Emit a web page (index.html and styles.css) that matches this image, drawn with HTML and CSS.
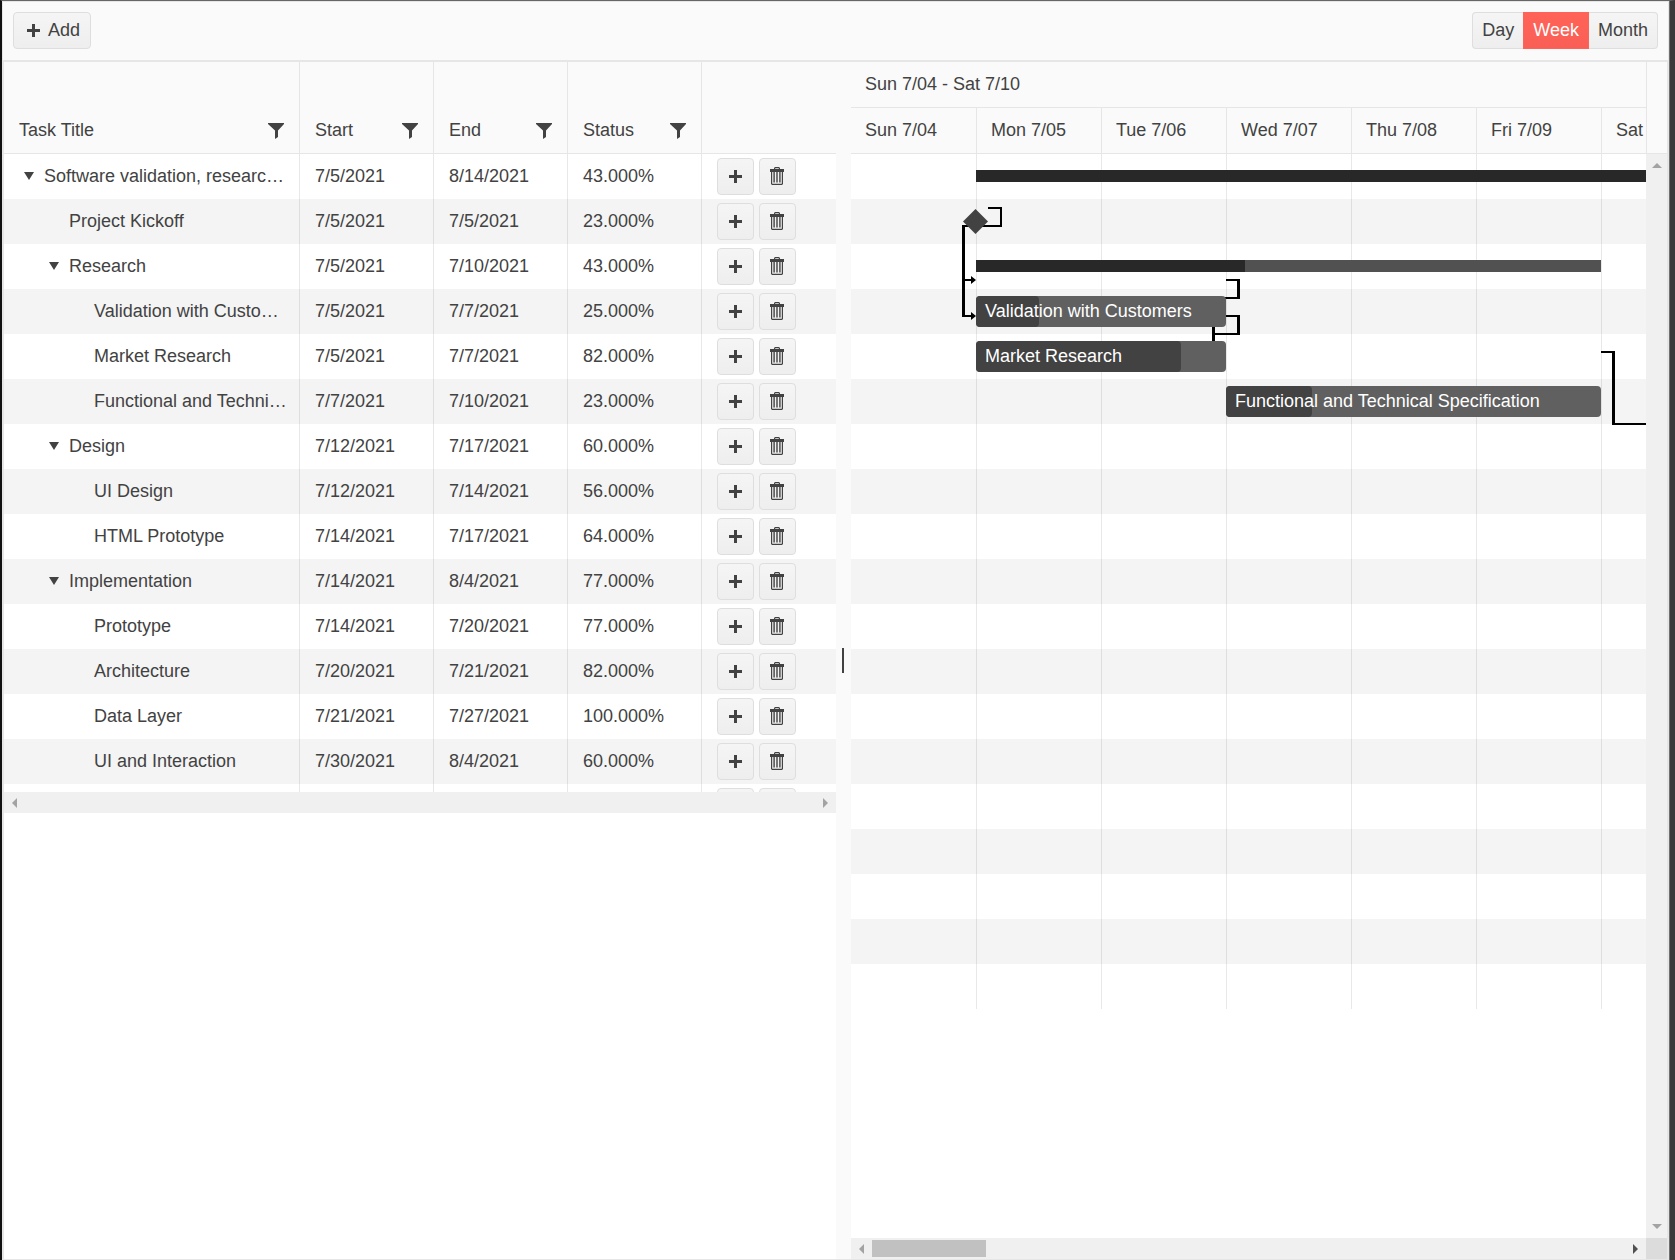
FILE: index.html
```html
<!DOCTYPE html>
<html lang="en">
<head>
<meta charset="utf-8">
<title>Project Gantt</title>
<link rel="stylesheet" href="styles.css">
</head>
<body>
<svg class="sprite" aria-hidden="true">
  <symbol id="plus" viewBox="0 0 13 13"><path d="M5 0h3v5h5v3H8v5H5V8H0V5h5z"/></symbol>
  <symbol id="trash" viewBox="0 0 14 18"><path fill-rule="evenodd" d="M4 2V1l1-1h4l1 1v1h4v3h-1v12l-1 1H2l-1-1V5H0V2zM5.200 2h3.600V1.200H5.200zM2.200 5v11.800h9.600V5zM3.400 5h1.400v10.500H3.400zM6.300 5h1.400v10.500H6.300zM9.200 5h1.400v10.500H9.200z"/></symbol>
  <symbol id="filter" viewBox="0 0 16 16"><path d="M0 0h16v1l-6 6.500V14l-3 2V7.500L0 1z"/></symbol>
</svg>
<main class="gantt">
  <header class="toolbar">
    <button class="btn btn-add" type="button"><svg class="i-plus"><use href="#plus"/></svg>Add</button>
    <div class="views">
      <button class="btn" type="button">Day</button>
      <button class="btn selected" type="button" aria-pressed="true">Week</button>
      <button class="btn" type="button">Month</button>
    </div>
  </header>
  <div class="content">
    <section class="list-pane">
      <div class="list-clip">
        <table class="tasks">
          <colgroup><col class="c-title"><col class="c-date"><col class="c-date"><col class="c-date"><col></colgroup>
          <thead>
            <tr>
              <th><div class="th">Task Title<svg class="i-filter"><use href="#filter"/></svg></div></th>
              <th><div class="th">Start<svg class="i-filter"><use href="#filter"/></svg></div></th>
              <th><div class="th">End<svg class="i-filter"><use href="#filter"/></svg></div></th>
              <th><div class="th">Status<svg class="i-filter"><use href="#filter"/></svg></div></th>
              <th></th>
            </tr>
          </thead>
          <tbody>
            <tr><td class="group">Software validation, researc…</td><td>7/5/2021</td><td>8/14/2021</td><td>43.000%</td><td><div class="actions"><button class="btn" type="button" aria-label="Add task"><svg class="i-plus"><use href="#plus"/></svg></button><button class="btn" type="button" aria-label="Delete task"><svg class="i-trash"><use href="#trash"/></svg></button></div></td></tr>
            <tr><td class="l1">Project Kickoff</td><td>7/5/2021</td><td>7/5/2021</td><td>23.000%</td><td><div class="actions"><button class="btn" type="button" aria-label="Add task"><svg class="i-plus"><use href="#plus"/></svg></button><button class="btn" type="button" aria-label="Delete task"><svg class="i-trash"><use href="#trash"/></svg></button></div></td></tr>
            <tr><td class="group nested">Research</td><td>7/5/2021</td><td>7/10/2021</td><td>43.000%</td><td><div class="actions"><button class="btn" type="button" aria-label="Add task"><svg class="i-plus"><use href="#plus"/></svg></button><button class="btn" type="button" aria-label="Delete task"><svg class="i-trash"><use href="#trash"/></svg></button></div></td></tr>
            <tr><td class="l2">Validation with Custo…</td><td>7/5/2021</td><td>7/7/2021</td><td>25.000%</td><td><div class="actions"><button class="btn" type="button" aria-label="Add task"><svg class="i-plus"><use href="#plus"/></svg></button><button class="btn" type="button" aria-label="Delete task"><svg class="i-trash"><use href="#trash"/></svg></button></div></td></tr>
            <tr><td class="l2">Market Research</td><td>7/5/2021</td><td>7/7/2021</td><td>82.000%</td><td><div class="actions"><button class="btn" type="button" aria-label="Add task"><svg class="i-plus"><use href="#plus"/></svg></button><button class="btn" type="button" aria-label="Delete task"><svg class="i-trash"><use href="#trash"/></svg></button></div></td></tr>
            <tr><td class="l2">Functional and Techni…</td><td>7/7/2021</td><td>7/10/2021</td><td>23.000%</td><td><div class="actions"><button class="btn" type="button" aria-label="Add task"><svg class="i-plus"><use href="#plus"/></svg></button><button class="btn" type="button" aria-label="Delete task"><svg class="i-trash"><use href="#trash"/></svg></button></div></td></tr>
            <tr><td class="group nested">Design</td><td>7/12/2021</td><td>7/17/2021</td><td>60.000%</td><td><div class="actions"><button class="btn" type="button" aria-label="Add task"><svg class="i-plus"><use href="#plus"/></svg></button><button class="btn" type="button" aria-label="Delete task"><svg class="i-trash"><use href="#trash"/></svg></button></div></td></tr>
            <tr><td class="l2">UI Design</td><td>7/12/2021</td><td>7/14/2021</td><td>56.000%</td><td><div class="actions"><button class="btn" type="button" aria-label="Add task"><svg class="i-plus"><use href="#plus"/></svg></button><button class="btn" type="button" aria-label="Delete task"><svg class="i-trash"><use href="#trash"/></svg></button></div></td></tr>
            <tr><td class="l2">HTML Prototype</td><td>7/14/2021</td><td>7/17/2021</td><td>64.000%</td><td><div class="actions"><button class="btn" type="button" aria-label="Add task"><svg class="i-plus"><use href="#plus"/></svg></button><button class="btn" type="button" aria-label="Delete task"><svg class="i-trash"><use href="#trash"/></svg></button></div></td></tr>
            <tr><td class="group nested">Implementation</td><td>7/14/2021</td><td>8/4/2021</td><td>77.000%</td><td><div class="actions"><button class="btn" type="button" aria-label="Add task"><svg class="i-plus"><use href="#plus"/></svg></button><button class="btn" type="button" aria-label="Delete task"><svg class="i-trash"><use href="#trash"/></svg></button></div></td></tr>
            <tr><td class="l2">Prototype</td><td>7/14/2021</td><td>7/20/2021</td><td>77.000%</td><td><div class="actions"><button class="btn" type="button" aria-label="Add task"><svg class="i-plus"><use href="#plus"/></svg></button><button class="btn" type="button" aria-label="Delete task"><svg class="i-trash"><use href="#trash"/></svg></button></div></td></tr>
            <tr><td class="l2">Architecture</td><td>7/20/2021</td><td>7/21/2021</td><td>82.000%</td><td><div class="actions"><button class="btn" type="button" aria-label="Add task"><svg class="i-plus"><use href="#plus"/></svg></button><button class="btn" type="button" aria-label="Delete task"><svg class="i-trash"><use href="#trash"/></svg></button></div></td></tr>
            <tr><td class="l2">Data Layer</td><td>7/21/2021</td><td>7/27/2021</td><td>100.000%</td><td><div class="actions"><button class="btn" type="button" aria-label="Add task"><svg class="i-plus"><use href="#plus"/></svg></button><button class="btn" type="button" aria-label="Delete task"><svg class="i-trash"><use href="#trash"/></svg></button></div></td></tr>
            <tr><td class="l2">UI and Interaction</td><td>7/30/2021</td><td>8/4/2021</td><td>60.000%</td><td><div class="actions"><button class="btn" type="button" aria-label="Add task"><svg class="i-plus"><use href="#plus"/></svg></button><button class="btn" type="button" aria-label="Delete task"><svg class="i-trash"><use href="#trash"/></svg></button></div></td></tr>
            <tr><td></td><td></td><td></td><td></td><td><div class="actions"><button class="btn" type="button" aria-label="Add task"></button><button class="btn" type="button" aria-label="Delete task"></button></div></td></tr>
          </tbody>
        </table>
      </div>
      <div class="hscroll"><i class="arrow left"></i><i class="arrow right"></i></div>
    </section>
    <div class="splitter"><span class="handle"></span></div>
    <section class="time-pane">
      <div class="time-head">
        <div class="time-head-clip">
          <table class="days">
            <thead>
              <tr><th class="range" colspan="7">Sun 7/04 - Sat 7/10</th></tr>
              <tr><th>Sun 7/04</th><th>Mon 7/05</th><th>Tue 7/06</th><th>Wed 7/07</th><th>Thu 7/08</th><th>Fri 7/09</th><th>Sat 7/10</th></tr>
            </thead>
          </table>
        </div>
        <div class="head-gap"></div>
      </div>
      <div class="time-body">
        <div class="viewport">
          <div class="canvas">
            <svg class="links" width="875" height="855" aria-hidden="true">
              <path d="M137 53h14v20H114v52h6v-3l5 4-5 4v-3h-6v34h6v-3l5 4-5 4v-3h-9V71h38V55h-12z"/>
              <path d="M375 125h14v20h-16v-2h13v-16h-11z"/>
              <path d="M375 161h14v20h-25v10h-3v-18h3v6h22v-16h-11z"/>
              <path d="M750 197h14v72h111v2H761v-72h-11z"/>
            </svg>
            <div class="summary" style="left:125px;top:16px;width:750px"><span style="width:100%"></span></div>
            <div class="milestone"></div>
            <div class="summary" style="left:125px;top:106px;width:625px"><span style="width:43%"></span></div>
            <div class="task" style="left:125px;top:142px;width:250px"><span style="width:25%"></span><b>Validation with Customers</b></div>
            <div class="task" style="left:125px;top:187px;width:250px"><span style="width:82%"></span><b>Market Research</b></div>
            <div class="task" style="left:375px;top:232px;width:375px"><span style="width:23%"></span><b>Functional and Technical Specification</b></div>
          </div>
        </div>
        <div class="vscroll"><i class="arrow up"></i><i class="arrow down"></i></div>
        <div class="hscroll"><i class="arrow left"></i><span class="thumb"></span><i class="arrow right active"></i></div>
        <div class="corner"></div>
      </div>
    </section>
  </div>
</main>
</body>
</html>
```
FILE: styles.css
```css
* { box-sizing: border-box; }

body {
  margin: 0;
  min-height: 100vh;
  display: flex;
  background: #fff;
  border-top: 1px solid #666;
  border-left: 2px solid #111;
  border-right: 5px solid #3b3b3b;
  color: #424242;
  font: 18px/24px "Liberation Sans", Arial, sans-serif;
}

.sprite { position: absolute; width: 0; height: 0; }

.gantt {
  flex: 1;
  min-width: 0;
  display: flex;
  flex-direction: column;
  border: 1px solid #e6e6e6;
  border-bottom: 0;
  box-shadow: 1px 0 #707070;
  margin-right: 1px;
}

.toolbar {
  display: flex;
  justify-content: space-between;
  padding: 10px 10px 11px;
  background: #fafafa;
  border-bottom: 1px solid #e6e6e6;
}

.btn {
  display: inline-flex;
  align-items: center;
  justify-content: center;
  height: 37px;
  padding: 0 9px 2px;
  border: 1px solid #dedede;
  border-radius: 4px;
  background: linear-gradient(#f5f5f5, #eee);
  color: #424242;
  font: inherit;
}

.btn-add { width: 78px; gap: 8px; justify-content: flex-start; padding-left: 13px; }
.btn svg { fill: #424242; flex: none; }
.btn-add svg { margin-top: 2px; }
.i-plus { width: 13px; height: 13px; }
.i-trash { width: 14px; height: 18px; }

.views { display: flex; }
.views .btn:first-child { border-radius: 4px 0 0 4px; border-right: 0; }
.views .btn:last-child { border-radius: 0 4px 4px 0; border-left: 0; }
.views .selected {
  border-radius: 0;
  border-color: #ff6358;
  background: linear-gradient(#ff6358, #fa5f55);
  color: #fff;
}

.content {
  flex: 1;
  display: grid;
  grid-template-columns: 832px 15px minmax(0, 1fr);
  border: 1px solid #e6e6e6;
}

.list-clip { height: 730px; overflow: hidden; }

table { border-collapse: separate; border-spacing: 0; table-layout: fixed; }
th, td { padding: 0; font-weight: 400; text-align: left; white-space: nowrap; }

.tasks { width: 100%; }
.c-title { width: 295px; }
.c-date { width: 134px; }
.tasks th {
  height: 92px;
  vertical-align: bottom;
  background: #fafafa;
  border-bottom: 1px solid #e6e6e6;
}
.tasks th + th { border-left: 1px solid #e6e6e6; }
.th {
  display: flex;
  align-items: center;
  justify-content: space-between;
  height: 45px;
  padding: 0 15px 2px;
}
.i-filter { width: 16px; height: 16px; margin-top: 3px; fill: #424242; }

.tasks td {
  height: 45px;
  padding: 0 8px 2px 15px;
  overflow: hidden;
  text-overflow: ellipsis;
}
.tasks td + td { border-left: 1px solid rgba(0, 0, 0, .09); }
.tasks tbody tr:nth-child(even) { background: #f4f4f4; }
.tasks td.l1 { padding-left: 65px; }
.tasks td.l2 { padding-left: 90px; }
.tasks td.nested { padding-left: 40px; }
.group::before {
  content: "";
  display: inline-block;
  margin: 0 10px 2px 5px;
  border: 5px solid transparent;
  border-top: 8px solid #424242;
  border-bottom: 0;
}
.tasks td:last-child { padding: 0 15px; }
.actions { display: flex; gap: 5px; }
.actions .btn { width: 37px; padding: 0 1px 1px 0; }

.hscroll {
  display: flex;
  align-items: center;
  justify-content: space-between;
  height: 21px;
  padding: 0 8px;
  background: #f0f0f0;
}
.arrow { flex: none; border: 0 solid transparent; }
.left { border-width: 5px 5px 5px 0; border-right-color: #a3a3a3; }
.right { border-width: 5px 0 5px 5px; border-left-color: #a3a3a3; }
.right.active { border-left-color: #505050; margin-left: auto; }
.up { border-width: 0 5px 5px; border-bottom-color: #a3a3a3; }
.down { border-width: 5px 5px 0; border-top-color: #a3a3a3; }
.thumb { width: 114px; height: 17px; margin-left: 8px; background: #c1c1c1; }

.splitter {
  display: flex;
  align-items: center;
  justify-content: center;
  padding-right: 1px;
  background: #fafafa;
}
.handle { width: 2px; height: 25px; background: #424242; }

.time-pane { display: flex; flex-direction: column; }
.time-head {
  display: grid;
  grid-template-columns: minmax(0, 1fr) 21px;
  background: #fafafa;
  border-bottom: 1px solid #e6e6e6;
}
.time-head-clip { overflow: hidden; }
.head-gap { border-left: 1px solid #e6e6e6; }
.days { width: 875px; }
.days th { height: 45px; padding: 0 14px 2px; }
.days th + th { border-left: 1px solid #e6e6e6; }
.days .range { height: 46px; border-bottom: 1px solid #e6e6e6; }

.time-body {
  flex: 1;
  display: grid;
  grid-template: minmax(0, 1fr) 21px / minmax(0, 1fr) 21px;
}
.viewport { overflow: hidden; }
.canvas {
  position: relative;
  width: 875px;
  height: 855px;
  background:
    linear-gradient(90deg, transparent 0 125px, rgba(0, 0, 0, .09) 125px 126px, transparent 126px 250px, rgba(0, 0, 0, .09) 250px 251px, transparent 251px 375px, rgba(0, 0, 0, .09) 375px 376px, transparent 376px 500px, rgba(0, 0, 0, .09) 500px 501px, transparent 501px 625px, rgba(0, 0, 0, .09) 625px 626px, transparent 626px 750px, rgba(0, 0, 0, .09) 750px 751px, transparent 751px 875px),
    repeating-linear-gradient(#fff 0 45px, #f4f4f4 45px 90px);
}
.links { position: absolute; inset: 0; fill: #000; }
.summary { position: absolute; height: 12px; background: #515151; }
.summary span { display: block; height: 100%; background: #282828; }
.milestone {
  position: absolute;
  left: 112px;
  top: 55px;
  width: 25px;
  height: 25px;
  background: #424242;
  clip-path: polygon(50% 0, 100% 50%, 50% 100%, 0 50%);
}
.task {
  position: absolute;
  height: 31px;
  border-radius: 4px;
  background: #606060;
  color: #fff;
}
.task span { position: absolute; inset: 0 auto 0 0; border-radius: 4px; background: #424242; }
.task b {
  position: relative;
  display: block;
  padding: 3px 9px;
  font-weight: 400;
  white-space: nowrap;
}

.vscroll {
  display: flex;
  flex-direction: column;
  align-items: center;
  justify-content: space-between;
  padding: 9px 0;
  background: #f0f0f0;
}
.corner { background: #dcdcdc; }
```
